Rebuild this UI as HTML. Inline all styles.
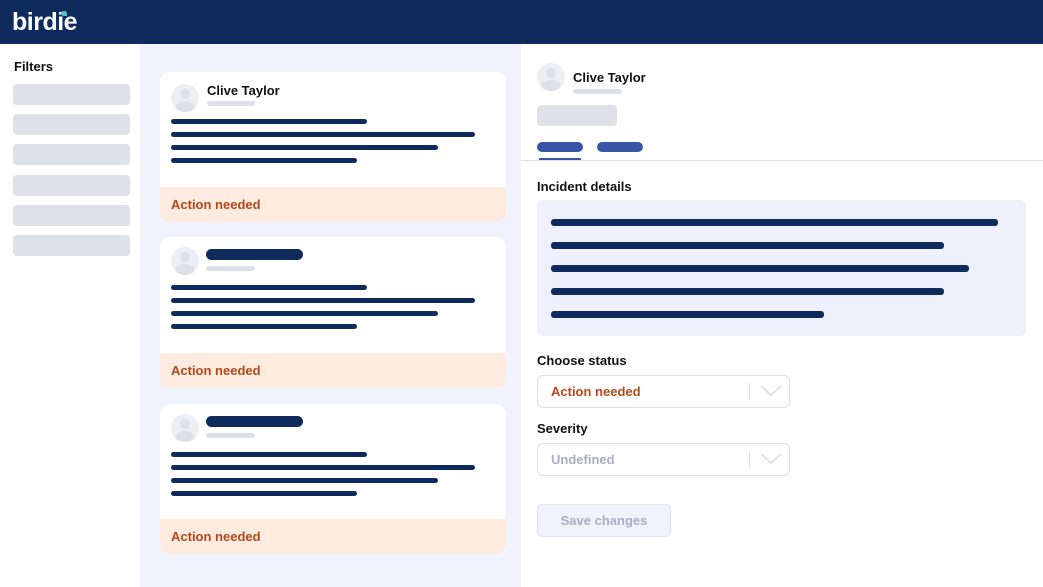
<!DOCTYPE html>
<html><head><style>
*{margin:0;padding:0;box-sizing:border-box}
body{width:1043px;height:587px;position:relative;overflow:hidden;background:#fff;font-family:"Liberation Sans",sans-serif}
.a{position:absolute}
.g{background:#dfe1e8;border-radius:4px}
.l{position:absolute;height:5px;border-radius:3px;background:#0f2a5c}
.card{position:absolute;left:160px;width:346px;background:#fff;border-radius:10px;overflow:hidden}
.band{position:absolute;left:0;right:0;bottom:0;height:35px;background:#fdebdf;color:#b4481c;font-weight:bold;font-size:13px;padding:10px 0 0 11px}
.av{position:absolute;width:28px;height:28px;border-radius:50%;background:#eceef3;overflow:hidden}
.av:before{content:"";position:absolute;left:9px;top:5px;width:10px;height:10px;border-radius:50%;background:#dde0e7}
.av:after{content:"";position:absolute;left:4px;top:17px;width:20px;height:16px;border-radius:50%;background:#dde0e7}
.b{font-weight:bold;font-size:13px;color:#111}
.sel{position:absolute;left:537px;width:253px;height:33px;border:1px solid #dcdfe7;border-radius:6px;font-weight:bold;font-size:13px;padding:8px 0 0 13px}
.sel i{position:absolute;left:211px;top:7px;width:1px;height:17px;background:#dcdfe7}
.sel svg{position:absolute;left:222px;top:9px}
</style></head><body>
<div class="a" style="left:0;top:0;width:1043px;height:44px;background:#0f2a5c"></div>
<div class="a" style="left:12px;top:8px;color:#fff;font-weight:bold;font-size:25px;letter-spacing:-0.5px">birdie</div>
<div class="a" style="left:61px;top:11px;width:6px;height:5px;background:#4fc3c8;border-radius:3px 3px 0 3px"></div>
<div class="a b" style="left:14px;top:59px">Filters</div>
<div class="a g" style="left:13px;top:84px;width:117px;height:21px"></div>
<div class="a g" style="left:13px;top:114px;width:117px;height:21px"></div>
<div class="a g" style="left:13px;top:144px;width:117px;height:21px"></div>
<div class="a g" style="left:13px;top:175px;width:117px;height:21px"></div>
<div class="a g" style="left:13px;top:205px;width:117px;height:21px"></div>
<div class="a g" style="left:13px;top:235px;width:117px;height:21px"></div>
<div class="a" style="left:140px;top:44px;width:381px;height:543px;background:#f0f3fd"></div>

<div class="card" style="top:72px;height:150px">
<div class="av" style="left:11px;top:12px"></div>
<div class="a b" style="left:47px;top:11px">Clive Taylor</div>
<div class="a g" style="left:47px;top:29px;width:48px;height:5px"></div>
<div class="l" style="left:11px;top:47px;width:196px"></div>
<div class="l" style="left:11px;top:60px;width:304px"></div>
<div class="l" style="left:11px;top:73px;width:267px"></div>
<div class="l" style="left:11px;top:86px;width:186px"></div>
<div class="band">Action needed</div></div>

<div class="card" style="top:237px;height:151px">
<div class="av" style="left:11px;top:10px"></div>
<div class="l" style="left:46px;top:12px;width:97px;height:11px;border-radius:6px"></div>
<div class="a g" style="left:46px;top:29px;width:49px;height:5px"></div>
<div class="l" style="left:11px;top:48px;width:196px"></div>
<div class="l" style="left:11px;top:61px;width:304px"></div>
<div class="l" style="left:11px;top:74px;width:267px"></div>
<div class="l" style="left:11px;top:87px;width:186px"></div>
<div class="band">Action needed</div></div>

<div class="card" style="top:404px;height:150px">
<div class="av" style="left:11px;top:10px"></div>
<div class="l" style="left:46px;top:12px;width:97px;height:11px;border-radius:6px"></div>
<div class="a g" style="left:46px;top:29px;width:49px;height:5px"></div>
<div class="l" style="left:11px;top:48px;width:196px"></div>
<div class="l" style="left:11px;top:61px;width:304px"></div>
<div class="l" style="left:11px;top:74px;width:267px"></div>
<div class="l" style="left:11px;top:87px;width:186px"></div>
<div class="band">Action needed</div></div>

<div class="av" style="left:537px;top:63px"></div>
<div class="a b" style="left:573px;top:70px">Clive Taylor</div>
<div class="a g" style="left:573px;top:89px;width:49px;height:5px"></div>
<div class="a g" style="left:537px;top:105px;width:80px;height:21px"></div>
<div class="a" style="left:537px;top:142px;width:46px;height:10px;border-radius:5px;background:#3757a6"></div>
<div class="a" style="left:597px;top:142px;width:46px;height:10px;border-radius:5px;background:#3757a6"></div>
<div class="a" style="left:539px;top:158px;width:42px;height:2px;background:#3757a6"></div>
<div class="a" style="left:521px;top:160px;width:522px;height:1px;background:#dcdfe7"></div>
<div class="a b" style="left:537px;top:179px">Incident details</div>
<div class="a" style="left:537px;top:200px;width:489px;height:136px;background:#eef1fc;border-radius:6px"></div>
<div class="l" style="left:551px;top:219px;width:447px;height:7px"></div>
<div class="l" style="left:551px;top:242px;width:393px;height:7px"></div>
<div class="l" style="left:551px;top:265px;width:418px;height:7px"></div>
<div class="l" style="left:551px;top:288px;width:393px;height:7px"></div>
<div class="l" style="left:551px;top:311px;width:273px;height:7px"></div>
<div class="a b" style="left:537px;top:353px">Choose status</div>
<div class="sel" style="top:375px;color:#b4481c">Action needed<i></i><svg width="22" height="12"><path d="M1 1L11 10L21 1" fill="none" stroke="#d6d9e1" stroke-width="1.5"/></svg></div>
<div class="a b" style="left:537px;top:421px">Severity</div>
<div class="sel" style="top:443px;color:#a7aebf">Undefined<i></i><svg width="22" height="12"><path d="M1 1L11 10L21 1" fill="none" stroke="#d6d9e1" stroke-width="1.5"/></svg></div>
<div class="a" style="left:537px;top:504px;width:134px;height:33px;background:#f0f3fd;border:1px solid #dfe3ef;border-radius:5px;color:#a7aebf;font-weight:bold;font-size:13px;text-align:center;padding-top:8px">Save changes</div>
</body></html>
